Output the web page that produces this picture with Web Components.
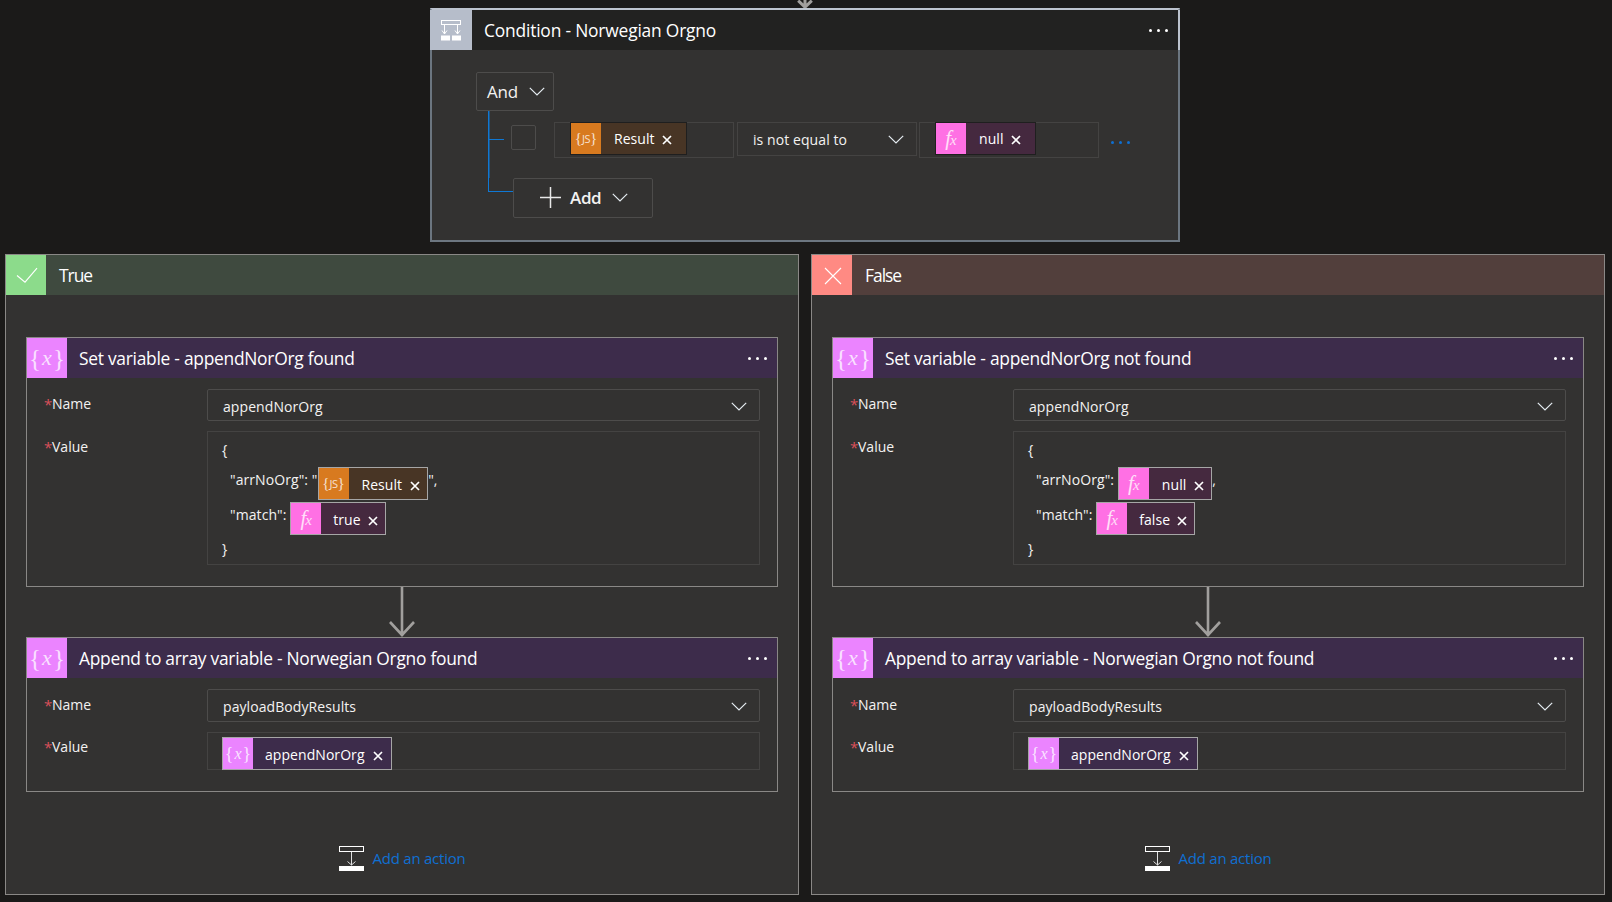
<!DOCTYPE html>
<html lang="en"><head><meta charset="utf-8"><title>Condition</title>
<style>
html,body{margin:0;padding:0;background:#1b1a19;height:100%;overflow:hidden}
body{font-family:"Open Sans","Noto Sans",sans-serif;color:#f3f2f1;font-size:14px}
</style></head>
<body>
<template id="t-flow-canvas"><style>
:host{display:flex;flex-direction:column;height:902px;box-sizing:border-box}
.top{display:flex;height:8px;padding-left:797px}
.cond{display:flex;padding-left:430px}
.branches{display:flex;gap:12px;padding:12px 0 0 5px}
</style>
<div class="top"><slot name="arrow"></slot></div>
<div class="cond"><slot name="condition"></slot></div>
<div class="branches"><slot></slot></div></template>

<template id="t-top-arrow"><style>:host{display:block;height:8px}svg{display:block}</style>
<svg width="16" height="8" viewBox="0 0 16 8"><path d="M8 -1V7M1.2 0.6L8 7.2 14.8 0.6" fill="none" stroke="#a19f9d" stroke-width="3"/></svg></template>

<template id="t-condition-card"><style>
:host{display:block;width:750px;height:234px;box-sizing:border-box;background:#333231;border:2px solid #6c7680;border-top-color:#bcc3ce}
.head{display:flex;align-items:center;height:40px;background:#222221;margin:0 -2px 0 -2px;box-shadow:2px 0 0 -0px #bcc3ce inset,-2px 0 0 0 #bcc3ce inset}
.ic{width:42px;height:40px;background:#b6bdca;flex:none;display:flex;align-items:center;justify-content:center}
.t{flex:1;padding-left:12px;font-size:17.4px;letter-spacing:-.19px;line-height:40px;color:#fff}
.more{padding-right:12px;display:flex}
.body{padding:22px 0 0 44px}
</style>
<div class="head"><div class="ic"><svg width="24" height="24" viewBox="0 0 24 24"><g fill="none" stroke="#fff"><rect x="2.5" y="2.5" width="19" height="4"/><path d="M5.500 7V16M18.500 7V16M3 12.500L5.500 16 8 12.500M16 12.500L18.500 16 21 12.500"/></g><path fill="#fff" d="M2 17.500h9v5H2zM13 17.500h9v5h-9z"/></svg></div><div class="t"><slot name="title"></slot></div><div class="more"><more-dots></more-dots></div></div>
<div class="body"><slot></slot></div></template>

<template id="t-condition-tree"><style>
:host{display:flex;flex-direction:column;align-items:flex-start}
.and{box-sizing:border-box;width:78px;height:39px;border:1px solid #4d4c4b;border-radius:2px;display:flex;align-items:center;gap:11px;padding-left:10px;font-size:17px;letter-spacing:-.2px}
.row{display:flex;align-items:flex-start;height:67px;margin-left:12px}
.c1{width:16px;height:67px;background:linear-gradient(#0f78d4,#0f78d4) 0 0/1.5px 100% no-repeat,linear-gradient(#0f78d4,#0f78d4) 0 28px/100% 1px no-repeat}
.chk{box-sizing:border-box;width:25px;height:25px;border:1px solid #4d4c4b;border-radius:2px;margin:14px 18px 0 7px}
.box{box-sizing:border-box;width:180px;height:36px;border:1px solid #444342;margin-top:11px;padding-left:15px;display:flex;align-items:flex-start}
.box ::slotted(*){margin-top:-1px}
.op{box-sizing:border-box;width:180px;height:34px;border:1px solid #444342;margin:11px 2px 0 3px;display:flex;align-items:center;justify-content:space-between;padding:0 12px 0 15px;letter-spacing:.08px}
.d{margin:30px 0 0 12px;display:flex}
.add{display:flex;margin-left:12px}
.c2{box-sizing:border-box;width:25px;height:14px;border-left:1.5px solid #0f78d4;border-bottom:1px solid #0f78d4}
.ab{box-sizing:border-box;width:140px;height:40px;border:1px solid #4d4c4b;border-radius:2px;display:flex;align-items:center;padding:0 0 2px 26px;gap:9px;font-weight:600;font-size:17px;letter-spacing:-.35px}
.ab select-chev{margin-left:2px}
</style>
<div class="and"><span>And</span><select-chev></select-chev></div>
<div class="row"><div class="c1"></div><div class="chk"></div>
<div class="box"><slot name="left"></slot></div>
<div class="op"><span><slot name="op"></slot></span><select-chev></select-chev></div>
<div class="box"><slot name="right"></slot></div>
<div class="d"><more-dots blue></more-dots></div></div>
<div class="add"><div class="c2"></div><div class="ab"><svg width="21" height="21" viewBox="0 0 21 21"><path d="M10.500 0V21M0 10.500H21" stroke="#e8e8e8" stroke-width="1.500"/></svg><span>Add</span><select-chev></select-chev></div></div></template>

<template id="t-select-chev"><style>:host{display:inline-flex}svg{display:block}</style>
<svg width="16" height="9" viewBox="0 0 16 9"><path d="M.8 .8L8 8 15.200 .8" fill="none" stroke="#e6edf2" stroke-width="1.200"/></svg></template>

<template id="t-more-dots"><style>
:host{display:inline-flex;gap:5px;color:#fff}
:host([blue]){color:#0f6fd1;gap:5px}
i{width:3px;height:3px;background:currentColor;border-radius:50%;display:block}
</style><i></i><i></i><i></i></template>

<template id="t-dyn-token"><style>
:host{display:inline-flex;box-sizing:border-box;height:33px;border:1px solid #1f1f1f;--ic:#d87a1f;--bg:#483525;font-size:14px;letter-spacing:.06px;vertical-align:top;flex:none;--pr:14px;--pt:0px;line-height:normal}
:host([light]){border-color:#a6a6a6;--pr:7px;--pt:1px}
:host([kind=fx]){--ic:#ff70e4;--bg:#45293f}
:host([kind=var]){--ic:#eb84ff;--bg:#3d2c4b}
.ic{width:30px;background:var(--ic);display:flex;align-items:center;justify-content:center;font-family:"Liberation Serif",serif;color:#fff;line-height:1;letter-spacing:0}
.ic span{opacity:.78;display:flex;align-items:center}
:host([kind=js]) .ic{font-size:15px}
:host([kind=js]) small{font-family:"Open Sans",sans-serif;font-size:11px;padding:0;letter-spacing:-.4px}
:host([kind=fx]) .ic{font-style:italic;font-size:21px}
:host([kind=fx]) small{font-size:15px;margin:3px 0 0 -1px}
:host([kind=var]) .ic{font-size:18px}
:host([kind=var]) small{font-size:16px;font-style:italic;padding:0 1px}
.m{background:var(--bg);display:flex;align-items:center;padding:var(--pt) var(--pr) 0 var(--pl,13px);gap:var(--g,8px);color:#fff;flex:1}
.m svg{margin-top:3px}
</style><div class="ic"><span id="g"></span></div><div class="m"><span><slot></slot></span><svg width="10" height="10" viewBox="0 0 10 10"><path d="M1 1L9 9M9 1L1 9" stroke="#fff" stroke-width="1.700"/></svg></div></template>

<template id="t-branch-panel"><style>
:host{display:block;width:794px;height:641px;box-sizing:border-box;border:1px solid #8a8886;background:#333231;--ic:#8cdb8b;--bg:#3f4a3f}
:host([kind=false]){--ic:#ff8a83;--bg:#523f3c}
.head{display:flex;align-items:center;height:40px;background:var(--bg)}
.ic{width:40px;height:40px;background:var(--ic);display:flex;align-items:center;justify-content:center;flex:none}
.t{padding-left:13px;font-size:17.4px;letter-spacing:-1px;color:#fff}
.body{padding:42px 20px 0 20px;display:flex;flex-direction:column}
.foot{display:flex;justify-content:center;padding-top:54px}
</style><div class="head"><div class="ic"><svg width="40" height="40" viewBox="0 0 40 40"><path id="p" fill="none" stroke="#fff" stroke-width="1.100"/></svg></div><div class="t"><slot name="title"></slot></div></div>
<div class="body"><slot></slot><div class="foot"><add-action></add-action></div></div></template>

<template id="t-action-card"><style>
:host{display:block;box-sizing:border-box;border:1px solid #8a8886;width:752px}
.head{display:flex;align-items:center;height:40px;background:#3d2c4b}
.ic{width:40px;height:40px;background:#eb84ff;flex:none;display:flex;align-items:center;justify-content:center;font-family:"Liberation Serif",serif;font-size:25px;color:#fff;line-height:1}
.ic span{opacity:.75;display:flex;align-items:center}.ic i{font-size:22px;padding:0 1px}
.t{flex:1;padding-left:12px;font-size:17.4px;letter-spacing:-.27px;color:#fff}
.more{padding-right:10px;display:flex}
.body{padding:11px 17px 21px;display:flex;flex-direction:column;gap:10px}
</style><div class="head"><div class="ic"><span>{<i>x</i>}</span></div><div class="t"><slot name="title"></slot></div><div class="more"><more-dots></more-dots></div></div>
<div class="body"><slot></slot></div></template>

<template id="t-field-row"><style>
:host{display:grid;grid-template-columns:163px 1fr;font-size:14px;--fh:33px}
.l{padding-top:var(--lp,5px);line-height:20px;display:flex;letter-spacing:0}
.a{color:#d9505a;width:8px;letter-spacing:0;font-size:15px}
.f{box-sizing:border-box;height:var(--fh);border:1px solid #4d4c4b;border-radius:2px;display:flex;align-items:center;justify-content:space-between;padding:2px 12px 0 15px;letter-spacing:.08px}
:host([kind=value]) .f{display:block;padding:0;border-color:#444342;border-radius:0;height:auto}
</style><div class="l"><span class="a">*</span><slot name="label"></slot></div><div class="f"><span><slot></slot></span><select-chev id="c"></select-chev></div></template>

<template id="t-value-lines"><style>
:host{display:flex;flex-direction:column;padding:4px 0 0 14px;letter-spacing:.08px;height:132px;box-sizing:border-box}
</style><slot></slot></template>
<template id="t-value-line"><style>
:host{display:flex;align-items:flex-start;white-space:pre;height:var(--h,31px);line-height:var(--lh,27px)}
:host([i]){padding-left:8px}
</style><slot></slot></template>
<template id="t-token-field"><style>
:host{display:flex;padding:4px 0 0 14px;height:36px;box-sizing:border-box}
</style><slot></slot></template>

<template id="t-flow-arrow"><style>:host{display:flex;justify-content:center;height:var(--ah,51px)}svg{display:block}</style>
<svg width="26" height="50" viewBox="0 0 26 50"><path d="M13 0V49M1 35L13 48 25 35" fill="none" stroke="#a19f9d" stroke-width="2.600"/></svg></template>

<template id="t-add-action"><style>
:host{display:flex;align-items:center;gap:9px;height:25px}
span{color:#0f6fd1;font-size:15px;letter-spacing:-.25px;margin-top:-1px}
svg{display:block}
</style><svg width="25" height="25" viewBox="0 0 25 25"><rect x=".5" y=".5" width="24" height="5" fill="none" stroke="#fff"/><path d="M12.500 6V19M8.500 15.500L12.500 19 16.500 15.500" fill="none" stroke="#e0e0e0"/><rect y="20" width="25" height="5" fill="#fff"/></svg><span>Add an action</span></template>

<flow-canvas>
  <top-arrow slot="arrow"></top-arrow>
  <condition-card slot="condition">
    <span slot="title">Condition - Norwegian Orgno</span>
    <condition-tree>
      <dyn-token slot="left" kind="js" style="--g:7px">Result</dyn-token>
      <span slot="op">is not equal to</span>
      <dyn-token slot="right" kind="fx">null</dyn-token>
    </condition-tree>
  </condition-card>

  <branch-panel kind="true">
    <span slot="title">True</span>
    <action-card>
      <span slot="title">Set variable - appendNorOrg found</span>
      <field-row style="--fh:32px"><span slot="label">Name</span>appendNorOrg</field-row>
      <field-row kind="value" style="--lp:6px"><span slot="label">Value</span>
        <value-lines>
          <value-line>{</value-line>
          <value-line i style="--h:35px;--lh:26px">"arrNoOrg": "<dyn-token kind="js" light>Result</dyn-token>",</value-line>
          <value-line i style="--h:34px;--lh:26px">"match": <dyn-token kind="fx" light style="--pl:12px;--g:7px">true</dyn-token></value-line>
          <value-line style="--h:28px;--lh:25px">}</value-line>
        </value-lines>
      </field-row>
    </action-card>
    <flow-arrow style="--ah:50px"></flow-arrow>
    <action-card>
      <span slot="title">Append to array variable - Norwegian Orgno found</span>
      <field-row style="--lp:6px"><span slot="label">Name</span>payloadBodyResults</field-row>
      <field-row kind="value"><span slot="label">Value</span>
        <token-field><dyn-token kind="var" light style="--pl:12px;--pr:8px">appendNorOrg</dyn-token></token-field>
      </field-row>
    </action-card>
  </branch-panel>

  <branch-panel kind="false">
    <span slot="title">False</span>
    <action-card>
      <span slot="title">Set variable - appendNorOrg not found</span>
      <field-row style="--fh:32px"><span slot="label">Name</span>appendNorOrg</field-row>
      <field-row kind="value" style="--lp:6px"><span slot="label">Value</span>
        <value-lines>
          <value-line>{</value-line>
          <value-line i style="--h:35px;--lh:26px">"arrNoOrg": <dyn-token kind="fx" light>null</dyn-token>,</value-line>
          <value-line i style="--h:34px;--lh:26px">"match": <dyn-token kind="fx" light style="--pl:12px;--g:7px">false</dyn-token></value-line>
          <value-line style="--h:28px;--lh:25px">}</value-line>
        </value-lines>
      </field-row>
    </action-card>
    <flow-arrow style="--ah:50px"></flow-arrow>
    <action-card>
      <span slot="title">Append to array variable - Norwegian Orgno not found</span>
      <field-row style="--lp:6px"><span slot="label">Name</span>payloadBodyResults</field-row>
      <field-row kind="value"><span slot="label">Value</span>
        <token-field><dyn-token kind="var" light style="--pl:12px;--pr:8px">appendNorOrg</dyn-token></token-field>
      </field-row>
    </action-card>
  </branch-panel>
</flow-canvas>

<script>
const GLYPH={js:'{<small>JS</small>}',fx:'f<small>x</small>',var:'{<small>x</small>}'};
const PATH={true:'M11 20.500L19 27.200 31 13.200',false:'M13 13L29 29M29 13L13 29'};
for(const name of ['flow-canvas','top-arrow','condition-card','condition-tree','select-chev','more-dots','dyn-token','branch-panel','action-card','field-row','value-lines','value-line','token-field','flow-arrow','add-action']){
  customElements.define(name,class extends HTMLElement{
    constructor(){super();
      const r=this.attachShadow({mode:'open'});
      r.appendChild(document.getElementById('t-'+name).content.cloneNode(true));
    }
    connectedCallback(){
      const r=this.shadowRoot;
      if(name==='dyn-token') r.getElementById('g').innerHTML=GLYPH[this.getAttribute('kind')];
      if(name==='branch-panel') r.getElementById('p').setAttribute('d',PATH[this.getAttribute('kind')]);
      if(name==='field-row'&&this.getAttribute('kind')==='value') r.getElementById('c').remove();
    }
  });
}
</script>
</body></html>
